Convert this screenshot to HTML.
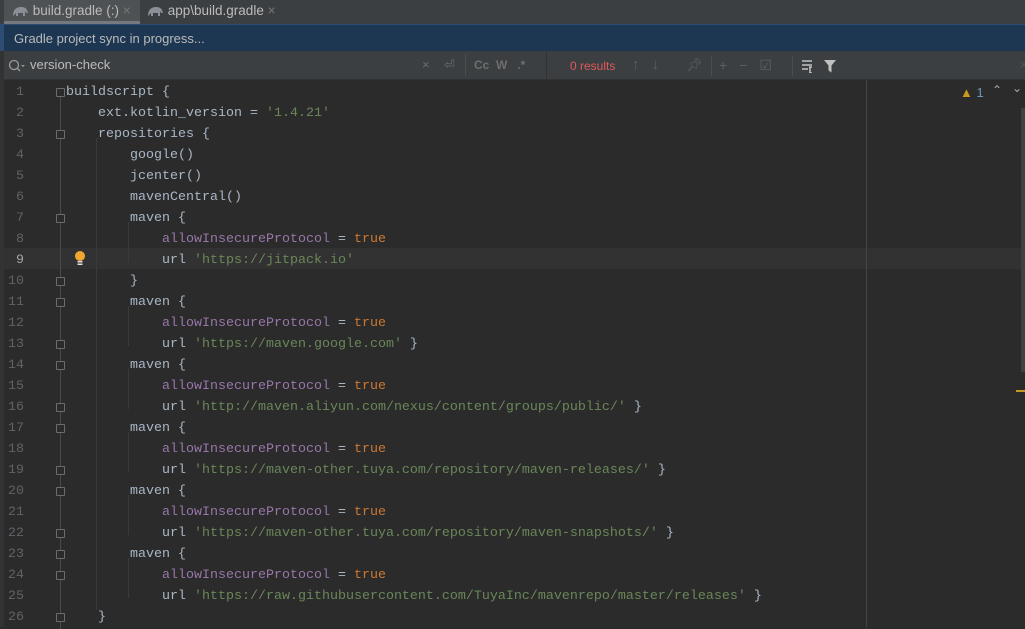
<!DOCTYPE html>
<html><head><style>
*{margin:0;padding:0;box-sizing:border-box}
body{width:1025px;height:627px;overflow:hidden;background:#2b2b2b;position:relative;font-family:"Liberation Sans",sans-serif}
.abs{position:absolute}
#tabs{left:0;top:0;width:1025px;height:24px;background:#3c3f41}
.tab{top:0;height:24px;color:#bbbbbb;font-size:13.5px;line-height:22px;white-space:nowrap}
#banner{left:0;top:24px;width:1025px;height:27px;background:#1d3651;color:#bbbbbb;font-size:13px;line-height:27px;padding-left:14px;border-top:1px solid #2d4e72}
#search{left:4px;top:51px;width:1021px;height:29px;background:#3c3f41;border-bottom:1px solid #323232}
#editor{left:4px;top:80px;width:1021px;height:547px;background:#2b2b2b}
.ln{position:absolute;left:4px;width:20px;text-align:right;color:#606366;font:13.33px/21px "Liberation Mono",monospace}
.code{position:absolute;left:66px;color:#a9b7c6;font:13.33px/21px "Liberation Mono",monospace;white-space:pre}
.s{color:#6a8759}.k{color:#cc7832}.p{color:#9876aa}
.fold{position:absolute;left:56px;width:9px;height:9px;border:1px solid #6c6c6c;border-radius:1px}
.ele{display:inline-block;vertical-align:-2px}
</style></head><body>
<div class="abs" style="left:0;top:0;width:4px;height:627px;background:#313335"></div>
<div id="tabs" class="abs">
 <div class="abs tab" style="left:4px;width:136px;background:#4e5254;padding-left:8px"><svg class="ele" width="17" height="13"><path d="M1 12 C1 6 4 3 9 3 C12 3 14 4 15 6 L16 9 L14 9 L13 7 L13 12 L11 12 L11 9 L6 9 L6 12 L4 12 L4 9 Z" fill="#8a9096"/></svg> build.gradle (:) <span style="color:#777">×</span></div>
 <div class="abs" style="left:4px;top:21px;width:136px;height:3px;background:#747a80"></div>
 <div class="abs tab" style="left:147px;padding-left:0"><svg class="ele" width="17" height="13"><path d="M1 12 C1 6 4 3 9 3 C12 3 14 4 15 6 L16 9 L14 9 L13 7 L13 12 L11 12 L11 9 L6 9 L6 12 L4 12 L4 9 Z" fill="#8a9096"/></svg> app\build.gradle <span style="color:#777">×</span></div>
</div>
<div id="banner" class="abs">Gradle project sync in progress...</div>
<div class="abs" style="left:0;top:24px;width:4px;height:27px;background:#2d4e72"></div>
<div id="search" class="abs">
 <svg class="abs" style="left:4px;top:8px" width="18" height="14"><circle cx="6" cy="6" r="4.5" fill="none" stroke="#9a9a9a" stroke-width="1.3"/><line x1="9" y1="9" x2="12" y2="12" stroke="#9a9a9a" stroke-width="1.3"/><path d="M13 6l2 2 2-2z" fill="#9a9a9a"/></svg>
 <div class="abs" style="left:26px;top:0;line-height:28px;color:#bbbbbb;font-size:13px">version-check</div>
 <div class="abs" style="left:418px;top:0;line-height:28px;color:#6a6a6a;font-size:13px">×</div>
 <div class="abs" style="left:440px;top:0;line-height:28px;color:#6a6a6a;font-size:13px">⏎</div>
 <div class="abs" style="left:461px;top:3px;width:1px;height:22px;background:#4b4d4f"></div>
 <div class="abs" style="left:470px;top:0;line-height:28px;color:#6e6e6e;font-size:12px;font-weight:bold">Cc&nbsp;&nbsp;W&nbsp;&nbsp;&nbsp;.*</div>
 <div class="abs" style="left:542px;top:0;width:1px;height:29px;background:#323232"></div>
 <div class="abs" style="left:566px;top:0;line-height:30px;color:#e0595b;font-size:12px">0 results</div>
 <div class="abs" style="left:628px;top:0;line-height:28px;color:#5e6060;font-size:15px;letter-spacing:12px">↑↓</div>
 <div class="abs" style="left:682px;top:0;line-height:28px;color:#5e6060;font-size:13px">📌&#xFE0E;</div>
 <div class="abs" style="left:707px;top:5px;width:1px;height:20px;background:#4b4d4f"></div>
 <div class="abs" style="left:715px;top:0;line-height:28px;color:#5e6060;font-size:14px;letter-spacing:12px">+−☑</div>
 <div class="abs" style="left:788px;top:5px;width:1px;height:20px;background:#4b4d4f"></div>
 <svg class="abs" style="left:798px;top:8px" width="34" height="14"><path d="M0 2h10M0 6h10M0 10h6M8 8v6M7 8h3M7 14h3" stroke="#c0c0c0" stroke-width="1.5"/><path d="M22 1h12l-4.5 5.5v7l-3-2v-5z" fill="#c0c0c0"/></svg>
 <div class="abs" style="left:1016px;top:0;line-height:28px;color:#555;font-size:13px">×</div>
</div>
<div id="editor" class="abs">
 <div class="abs" style="left:0;top:168px;width:1021px;height:21px;background:#323232"></div>
 <div class="abs" style="left:862px;top:0;width:1px;height:547px;background:#454545"></div>
 <div class="abs" style="left:1017px;top:28px;width:4px;height:264px;background:#3e4042"></div>
 <div class="abs" style="left:1012px;top:310px;width:9px;height:2px;background:#c69a1e"></div>
 <div class="abs" style="left:956px;top:5px;color:#c69a1e;font-size:13px">▲<span style="color:#6897bb"> 1</span></div>
 <div class="abs" style="left:988px;top:3px;color:#aaa;font-size:12px">⌃</div>
 <div class="abs" style="left:1008px;top:1px;color:#aaa;font-size:12px">⌄</div>
 <svg class="abs" style="left:70px;top:170px" width="12" height="16"><circle cx="6" cy="6" r="5" fill="#f0a732"/><rect x="3.5" y="11" width="5" height="1.5" fill="#ddd"/><rect x="3.5" y="13.5" width="5" height="1.5" fill="#ddd"/></svg>
</div>
<div class="abs" style="left:0;top:82px;width:1025px;height:545px">
<div class="abs" style="left:60px;top:14px;width:1px;height:533px;background:#4a4a4a"></div>
<div class="abs" style="left:96px;top:56px;width:1px;height:472px;background:#3a3a3a"></div>
<div class="abs" style="left:128px;top:140px;width:1px;height:40px;background:#3a3a3a"></div>
<div class="abs" style="left:128px;top:224px;width:1px;height:40px;background:#3a3a3a"></div>
<div class="abs" style="left:128px;top:287px;width:1px;height:40px;background:#3a3a3a"></div>
<div class="abs" style="left:128px;top:350px;width:1px;height:40px;background:#3a3a3a"></div>
<div class="abs" style="left:128px;top:413px;width:1px;height:40px;background:#3a3a3a"></div>
<div class="abs" style="left:128px;top:476px;width:1px;height:40px;background:#3a3a3a"></div>
</div>
<div class="abs" style="left:0;top:82px">
<div class="ln" style="top:0">1</div><div class="ln" style="top:21px">2</div><div class="ln" style="top:42px">3</div><div class="ln" style="top:63px">4</div><div class="ln" style="top:84px">5</div><div class="ln" style="top:105px">6</div><div class="ln" style="top:126px">7</div><div class="ln" style="top:147px">8</div><div class="ln" style="top:168px;color:#a4a3a3">9</div><div class="ln" style="top:189px">10</div><div class="ln" style="top:210px">11</div><div class="ln" style="top:231px">12</div><div class="ln" style="top:252px">13</div><div class="ln" style="top:273px">14</div><div class="ln" style="top:294px">15</div><div class="ln" style="top:315px">16</div><div class="ln" style="top:336px">17</div><div class="ln" style="top:357px">18</div><div class="ln" style="top:378px">19</div><div class="ln" style="top:399px">20</div><div class="ln" style="top:420px">21</div><div class="ln" style="top:441px">22</div><div class="ln" style="top:462px">23</div><div class="ln" style="top:483px">24</div><div class="ln" style="top:504px">25</div><div class="ln" style="top:525px">26</div>
<div class="fold" style="top:6px;background:#2b2b2b"></div><div class="fold" style="top:48px;background:#2b2b2b"></div><div class="fold" style="top:132px;background:#2b2b2b"></div><div class="fold" style="top:195px;background:#2b2b2b"></div><div class="fold" style="top:216px;background:#2b2b2b"></div><div class="fold" style="top:258px;background:#2b2b2b"></div><div class="fold" style="top:279px;background:#2b2b2b"></div><div class="fold" style="top:321px;background:#2b2b2b"></div><div class="fold" style="top:342px;background:#2b2b2b"></div><div class="fold" style="top:384px;background:#2b2b2b"></div><div class="fold" style="top:405px;background:#2b2b2b"></div><div class="fold" style="top:447px;background:#2b2b2b"></div><div class="fold" style="top:468px;background:#2b2b2b"></div><div class="fold" style="top:489px;background:#2b2b2b"></div><div class="fold" style="top:531px;background:#2b2b2b"></div>
<div class="code" style="top:0">buildscript {
    ext.kotlin_version = <span class="s">'1.4.21'</span>
    repositories {
        google()
        jcenter()
        mavenCentral()
        maven {
            <span class="p">allowInsecureProtocol</span> = <span class="k">true</span>
            url <span class="s">'https://jitpack.io'</span>
        }
        maven {
            <span class="p">allowInsecureProtocol</span> = <span class="k">true</span>
            url <span class="s">'https://maven.google.com'</span> }
        maven {
            <span class="p">allowInsecureProtocol</span> = <span class="k">true</span>
            url <span class="s">'http://maven.aliyun.com/nexus/content/groups/public/'</span> }
        maven {
            <span class="p">allowInsecureProtocol</span> = <span class="k">true</span>
            url <span class="s">'https://maven-other.tuya.com/repository/maven-releases/'</span> }
        maven {
            <span class="p">allowInsecureProtocol</span> = <span class="k">true</span>
            url <span class="s">'https://maven-other.tuya.com/repository/maven-snapshots/'</span> }
        maven {
            <span class="p">allowInsecureProtocol</span> = <span class="k">true</span>
            url <span class="s">'https://raw.githubusercontent.com/TuyaInc/mavenrepo/master/releases'</span> }
    }</div>
</div>
</body></html>
